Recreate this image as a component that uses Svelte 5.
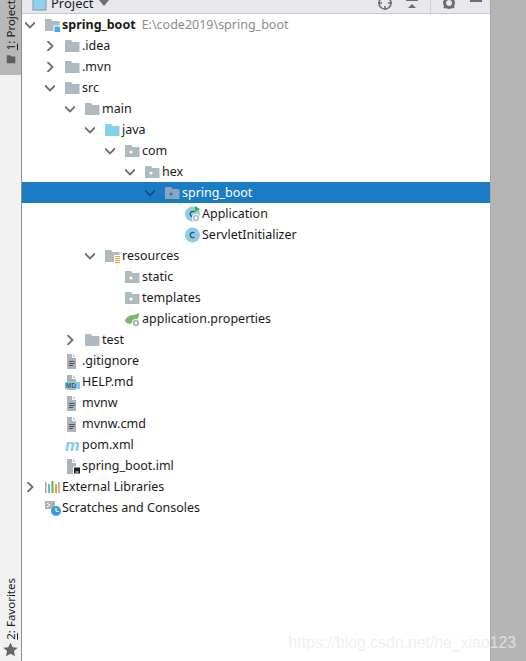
<script>
  // flat list of the tree, depth drives the indent
  const rows = [
    { depth: 0, open: true, icon: 'module', name: 'spring_boot', bold: true, hint: 'E:\\code2019\\spring_boot' },
    { depth: 1, open: false, icon: 'folder', name: '.idea' },
    { depth: 1, open: false, icon: 'folder', name: '.mvn' },
    { depth: 1, open: true, icon: 'folder', name: 'src' },
    { depth: 2, open: true, icon: 'folder', name: 'main' },
    { depth: 3, open: true, icon: 'source', name: 'java' },
    { depth: 4, open: true, icon: 'package', name: 'com' },
    { depth: 5, open: true, icon: 'package', name: 'hex' },
    { depth: 6, open: true, icon: 'package', name: 'spring_boot', selected: true },
    { depth: 7, icon: 'app', name: 'Application' },
    { depth: 7, icon: 'class', name: 'ServletInitializer' },
    { depth: 3, open: true, icon: 'resources', name: 'resources' },
    { depth: 4, icon: 'package', name: 'static' },
    { depth: 4, icon: 'package', name: 'templates' },
    { depth: 4, icon: 'props', name: 'application.properties' },
    { depth: 2, open: false, icon: 'folder', name: 'test' },
    { depth: 1, icon: 'file', name: '.gitignore' },
    { depth: 1, icon: 'md', name: 'HELP.md' },
    { depth: 1, icon: 'file', name: 'mvnw' },
    { depth: 1, icon: 'file', name: 'mvnw.cmd' },
    { depth: 1, icon: 'maven', name: 'pom.xml' },
    { depth: 1, icon: 'iml', name: 'spring_boot.iml' },
    { depth: 0, open: false, icon: 'libs', name: 'External Libraries' },
    { depth: 0, icon: 'scratch', name: 'Scratches and Consoles' }
  ];
</script>

{#snippet folderShape(fill)}
  <path d="M0 2h6l1.500 2H14.500v10H0z" fill={fill} />
{/snippet}

{#snippet fileShape()}
  <path d="M2 1h5v4h4v11H2z" fill="#aab4bb" />
  <path d="M8 1l3 3H8z" fill="#c3cbd1" />
{/snippet}

{#snippet icon(kind, selected)}
  <svg class="icon" viewBox="0 0 16 16" width="16" height="16">
    {#if kind === 'folder'}
      {@render folderShape('#aeb9c0')}
    {:else if kind === 'source'}
      {@render folderShape('#85d0ea')}
    {:else if kind === 'package'}
      {@render folderShape(selected ? '#8ba6bb' : '#aeb9c0')}
      <circle cx="6" cy="9" r="1.600" fill={selected ? '#1a7cc4' : '#fff'} />
    {:else if kind === 'module'}
      {@render folderShape('#aeb9c0')}
      <rect x="9" y="9" width="6.500" height="6.500" fill="#3fb3e6" stroke="#fff" />
    {:else if kind === 'resources'}
      {@render folderShape('#aeb9c0')}
      <rect x="9" y="7" width="7" height="9" fill="#fff" />
      <path d="M10 8.500h5M10 10.500h5M10 12.500h5M10 14.500h5" stroke="#e2a33b" stroke-width="1" />
    {:else if kind === 'class' || kind === 'app'}
      <circle cx="7.500" cy="8" r="7.500" fill="#8ccde4" />
      <path d="M9.500 6a2.600 2.600 0 1 0 0 4" fill="none" stroke="#35566b" stroke-width="1.200" />
      {#if kind === 'app'}
        <path d="M10 0l5 3-5 3z" fill="#4fa83d" />
        <circle cx="11" cy="12" r="3.800" fill="#b6bfc6" stroke="#fff" />
        <circle cx="11" cy="12" r="1.400" fill="#fff" />
      {/if}
    {:else if kind === 'props'}
      <path d="M0 10c1-5 6-6 9-6l5-2c0 4-1 7-4 9-3 2-8 3-10-1z" fill="#77b767" />
      <circle cx="11" cy="12" r="3.800" fill="#a4afb7" stroke="#fff" />
      <circle cx="11" cy="12" r="1.400" fill="#fff" />
    {:else if kind === 'file'}
      {@render fileShape()}
      <path d="M4 8.500h5.500M4 10.500h5.500M4 12.500h4" stroke="#4d555b" stroke-width="1" />
    {:else if kind === 'md'}
      {@render fileShape()}
      <rect x="0" y="8" width="15" height="7" fill="#85cde6" />
      <text x="1" y="14" class="md">MD</text>
    {:else if kind === 'maven'}
      <text x="0" y="13.500" class="maven">m</text>
    {:else if kind === 'iml'}
      {@render fileShape()}
      <rect x="8.500" y="9" width="7" height="7" fill="#231f20" stroke="#fff" />
      <path d="M10.500 14h3" stroke="#fff" />
    {:else if kind === 'libs'}
      <path d="M0 3h1.500v11H0z" fill="#9aa7b0" />
      <path d="M3 5h2v9H3z" fill="#6fb5d8" />
      <path d="M6.500 2h2v12h-2z" fill="#62b543" />
      <path d="M10 5h2v9h-2z" fill="#e0a53b" />
      <path d="M13.200 3h1.500v11h-1.500z" fill="#9aa7b0" />
    {:else if kind === 'scratch'}
      <path d="M0 1h10v5l-3 3H0z" fill="#aab5bc" />
      <path d="M2 3l3 2-3 2" fill="none" stroke="#fff" />
      <circle cx="11" cy="11" r="5" fill="#3c9bd6" />
      <path d="M11 8v3.400h2.600" fill="none" stroke="#fff" />
    {/if}
  </svg>
{/snippet}

<div class="window">
  <aside class="stripe">
    <div class="tab-active">
      <span class="vtext"><u>1</u>: Project</span>
      <svg viewBox="0 0 16 16" width="14" height="14"><path d="M1 2h6l1.500 2H15v11H1z" fill="#5e5e5e" /></svg>
    </div>
    <div class="tab-bottom">
      <span class="vtext"><u>2</u>: Favorites</span>
      <svg viewBox="0 0 16 16" width="15" height="15"><path d="M8 .5l2.300 5 5.400.6-4 3.600 1.100 5.400L8 12.400l-4.800 2.700 1.100-5.400-4-3.600 5.400-.6z" fill="#666" /></svg>
    </div>
  </aside>

  <main class="panel">
    <header class="toolbar">
      <div class="title">
        <svg viewBox="0 0 16 16" width="15" height="15"><rect x="1" y="1" width="14" height="14" fill="#8fd0ea" stroke="#8a949c" /></svg>
        <span>Project</span>
        <i class="caret"></i>
      </div>
      <div class="tools">
        <svg viewBox="0 0 16 16" width="16" height="16"><circle cx="8" cy="8" r="6" fill="none" stroke="#6e6e6e" stroke-width="1.600" /><path d="M8 1v4M8 11v4M1 8h4M11 8h4" stroke="#6e6e6e" stroke-width="1.600" /></svg>
        <svg viewBox="0 0 16 16" width="16" height="16"><path d="M2 4h12v2H2z" fill="#6e6e6e" /><path d="M8 9l4 4H4z" fill="#6e6e6e" /></svg>
        <b class="sep"></b>
        <svg viewBox="0 0 16 16" width="16" height="16"><circle cx="8" cy="8" r="4.500" fill="none" stroke="#6e6e6e" stroke-width="3" /><path d="M3 13l2-2M13 13l-2-2" stroke="#6e6e6e" stroke-width="2.400" /></svg>
        <svg class="dash" viewBox="0 0 16 16" width="16" height="16"><path d="M2 11h12v3H2z" fill="#6e6e6e" /></svg>
      </div>
    </header>

    <ul class="tree">
      {#each rows as row}
        <li class="row" class:selected={row.selected} style="padding-left: {row.depth * 20 + 3}px">
          {#if row.open !== undefined}
            <svg class="chev" viewBox="0 0 10 10" width="10" height="10">
              {#if row.open}
                <path d="M0 2.500l5 5 5-5" />
              {:else}
                <path d="M2.500 0l5 5-5 5" />
              {/if}
            </svg>
          {:else}
            <span class="chev"></span>
          {/if}
          {@render icon(row.icon, row.selected)}
          <span class="name" class:bold={row.bold}>{row.name}</span>
          {#if row.hint}<span class="hint">{row.hint}</span>{/if}
        </li>
      {/each}
    </ul>
  </main>

  <div class="gutter"></div>
  <span class="watermark">https://blog.csdn.net/he_xiao123</span>
</div>

<style>
  :global(body) {
    margin: 0;
    background: #fff;
  }

  .window {
    position: relative;
    display: flex;
    width: 526px;
    height: 661px;
    overflow: hidden;
    font-family: "Noto Sans", "Noto Sans CJK SC", sans-serif;
    font-size: 12.5px;
    color: #1a1a1a;
  }

  .stripe {
    width: 21px;
    flex: none;
    display: flex;
    flex-direction: column;
    justify-content: space-between;
    background: #f2f2f2;
    border-right: 1px solid #8f8f8f;
  }

  .tab-active {
    height: 75px;
    background: #b8b8b8;
    display: flex;
    flex-direction: column;
    justify-content: flex-end;
    align-items: center;
    gap: 4px;
    padding-bottom: 11px;
    box-sizing: border-box;
    overflow: hidden;
  }

  .tab-bottom {
    display: flex;
    flex-direction: column;
    align-items: center;
    gap: 2px;
    padding-bottom: 4px;
  }

  .vtext {
    writing-mode: vertical-rl;
    transform: rotate(180deg);
    font-size: 11.5px;
    line-height: 16px;
    white-space: nowrap;
    flex: none;
  }

  .panel {
    flex: 1;
    min-width: 0;
    display: flex;
    flex-direction: column;
  }

  .toolbar {
    height: 13px;
    flex: none;
    box-sizing: content-box;
    display: flex;
    justify-content: space-between;
    align-items: flex-end;
    background: #e6e8ee;
    border-bottom: 1px solid #c8c9cc;
    overflow: hidden;
  }

  .title {
    display: flex;
    align-items: center;
    gap: 4px;
    height: 20px;
    padding-left: 10px;
    font-size: 13px;
  }

  .caret {
    width: 0;
    height: 0;
    margin-left: 2px;
    border: 5px solid transparent;
    border-top: 6px solid #6e6e6e;
    border-bottom: 0;
  }

  .tools {
    display: flex;
    align-items: center;
    gap: 11px;
    height: 20px;
    padding-right: 6px;
  }

  .sep {
    width: 1px;
    height: 20px;
    margin: 0 -1px;
    background: #d0d1d4;
  }

  .dash {
    margin-top: -14px;
  }

  .tree {
    list-style: none;
    margin: 0;
    padding: 0;
  }

  .row {
    display: flex;
    align-items: center;
    height: 21px;
    white-space: nowrap;
  }

  .row.selected {
    background: #1a7cc4;
    color: #fff;
  }

  .chev {
    width: 10px;
    height: 10px;
    flex: none;
    margin-right: 10px;
    fill: none;
    stroke: #6e6e6e;
    stroke-width: 1.8;
  }

  .row.selected .chev {
    stroke: #14507e;
  }

  .icon {
    flex: none;
    margin-right: 1px;
  }

  .name {
    margin-top: -1px;
  }

  .bold {
    font-weight: 700;
  }

  .hint {
    margin-left: 6px;
    color: #8c8c8c;
    font-size: 12.5px;
  }

  .md {
    font: 700 6.5px "Liberation Sans", sans-serif;
    fill: #3a5a70;
  }

  .maven {
    font: italic 700 16.5px "Liberation Sans", sans-serif;
    fill: #7fcbe8;
  }

  .gutter {
    width: 36px;
    flex: none;
    background: #b4b4b4;
    border-left: 1px solid #a9a9a9;
    box-sizing: border-box;
  }

  .watermark {
    position: absolute;
    right: 10px;
    bottom: 9px;
    font: 15.8px "Liberation Sans", sans-serif;
    color: rgba(235, 235, 235, 0.8);
  }
</style>
